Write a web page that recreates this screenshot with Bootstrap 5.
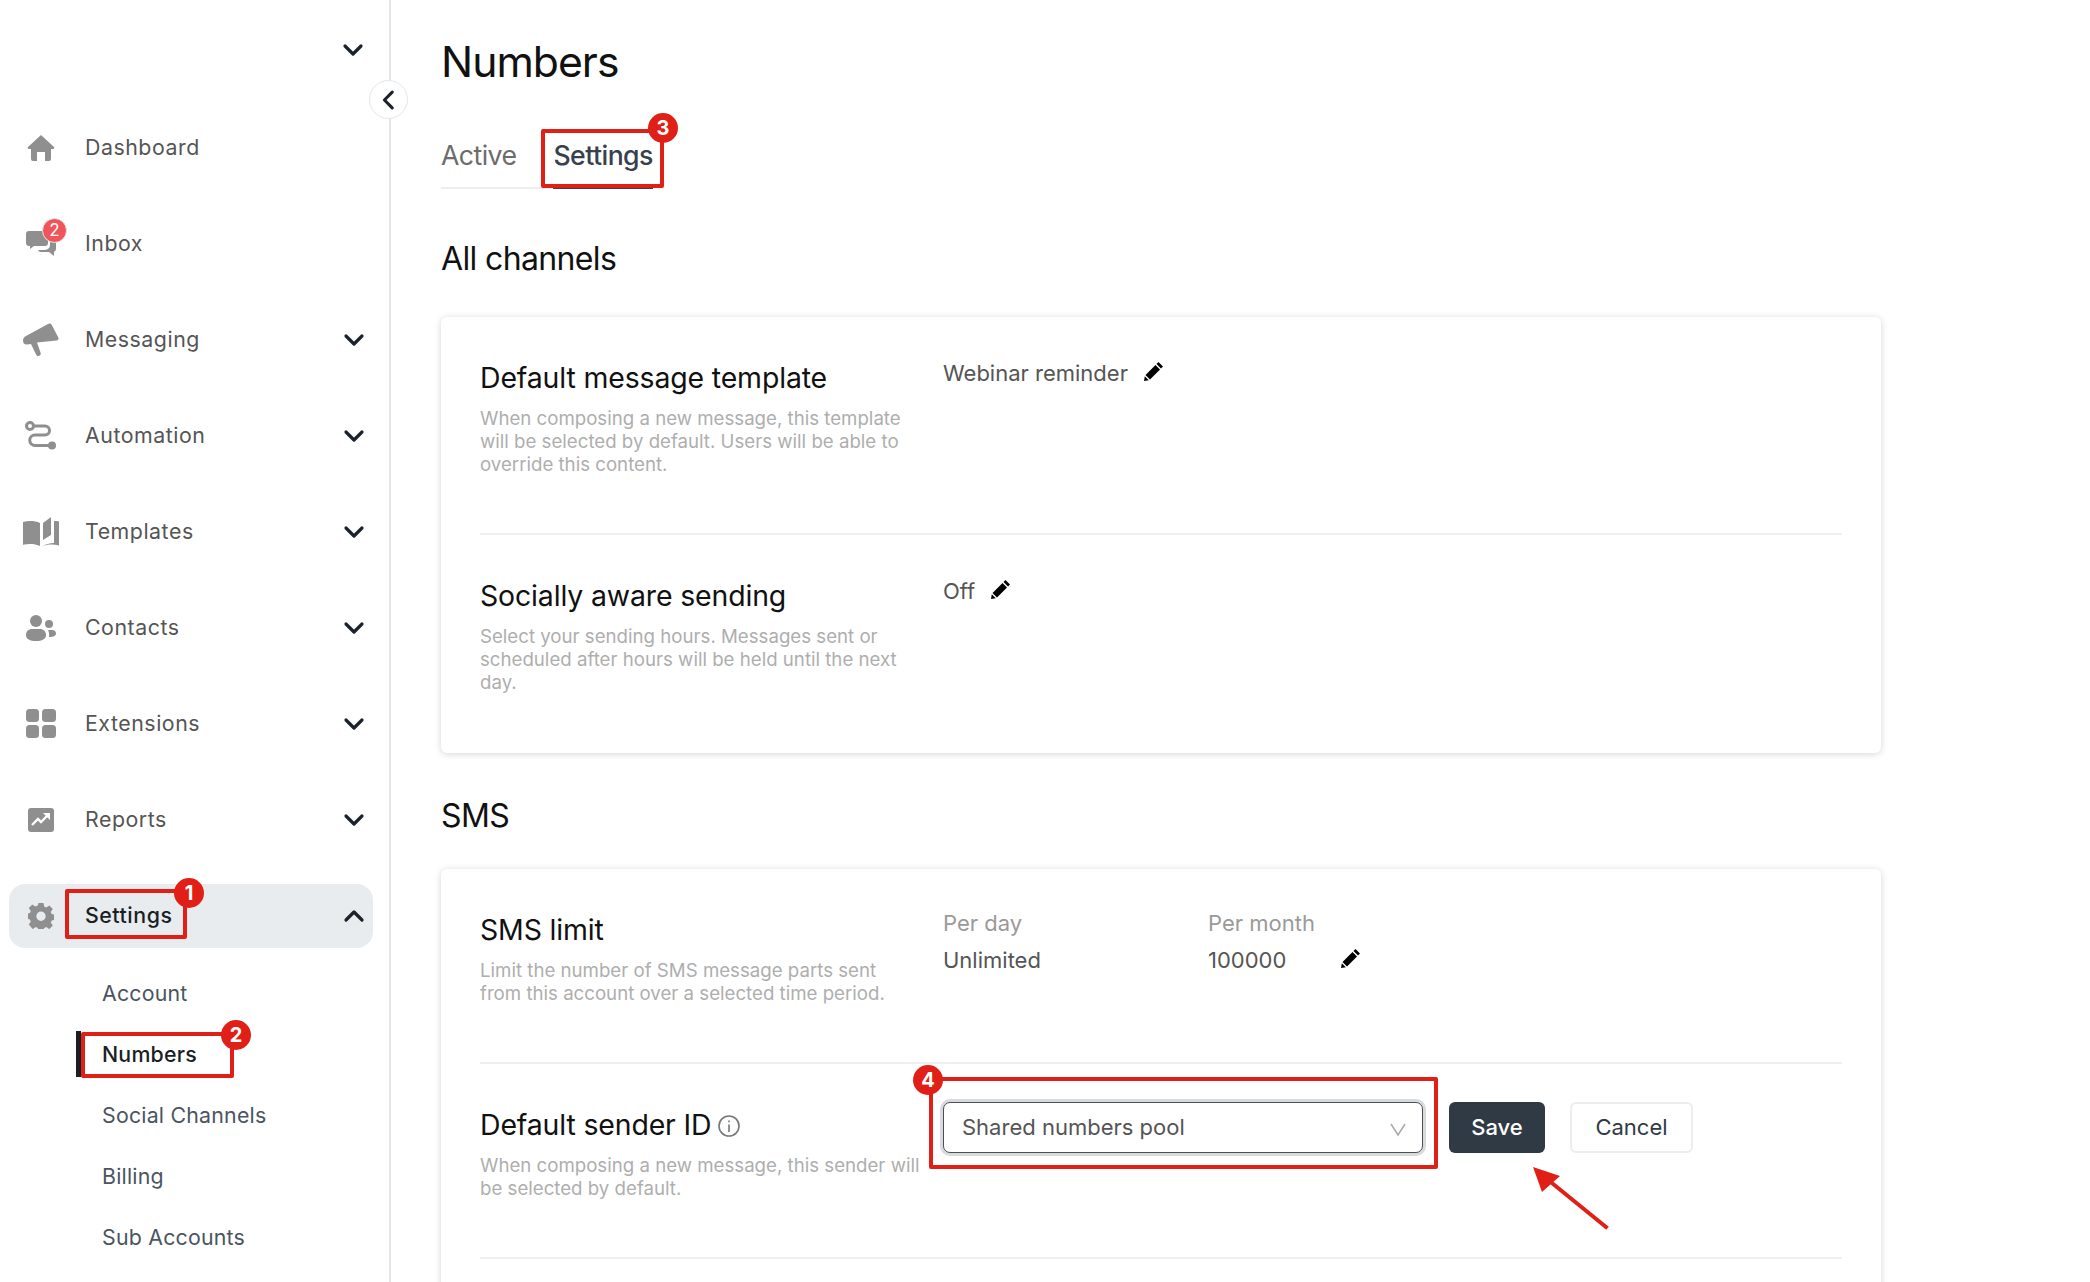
<!DOCTYPE html>
<html lang="en"><head><meta charset="utf-8"><title>Numbers</title>
<link href="https://cdn.jsdelivr.net/npm/bootstrap@5.3.0/dist/css/bootstrap.min.css" rel="stylesheet">
<style>
html,body{height:1282px;overflow:hidden;background:#fff}
body{position:relative;font-family:Inter,"Noto Sans",sans-serif}
.side{width:391px;height:1282px;border-right:2px solid #e3e6e9;flex:none;position:relative;overflow:visible}
.side-top{height:116px;padding:38px 24px 0 0}
.chev{width:24px;height:24px;flex:none;color:#1b2229}
.nv{height:64px;margin:0 16px 32px 9px;padding-right:7px;color:#555;font-size:21.33px;border-radius:16px;text-decoration:none}
.nv .ic{width:64px;flex:none;display:flex;justify-content:center;color:#8f8f8f;position:relative}
.nv .lb{margin-left:12px;flex:1;letter-spacing:.025em}
.nv.on{background:#e9ecef;color:#1a1f24;font-weight:500;margin-bottom:22px}
.inbox-dot{position:absolute;left:33px;top:-12px;width:25px;height:25px;border-radius:50%;background:#f0555a;border:1px solid #e3e6e9;color:#fff;font-size:17px;line-height:23px;text-align:center}
.sub{padding-left:76px}
.sub a{display:block;height:46px;line-height:46px;margin-bottom:15px;border-left:5px solid transparent;padding-left:21px;color:#4a5560;font-size:21.33px;text-decoration:none;letter-spacing:.01em}
.sub a:last-child{margin-bottom:0}
.sub a.on{border-left-color:#1a1f24;color:#1a1f24;font-weight:500}
.collapse-btn{position:absolute;left:369px;top:80px;width:39px;height:39px;border-radius:50%;background:#fff;border:1px solid #e3e6e9;color:#1b2229;z-index:2}
.mainp{padding-left:50px;flex:1;height:1282px;overflow:hidden}
.ttl{font-size:42.67px;line-height:56px;font-weight:400;color:#111;margin:34px 0 0;letter-spacing:-.023em}
.tabsx{display:inline-flex;gap:37px;margin-top:43px;border-bottom:2px solid #eceef0;height:56px;letter-spacing:-.035em}
.tabsx a{font-size:26.67px;line-height:44px;color:#6c6c6c;text-decoration:none;height:56px}
.tabsx a.on{color:#36414d;font-weight:500;border-bottom:3px solid #36414d}
.sect{font-size:32px;line-height:40px;font-weight:400;color:#111;margin:0;letter-spacing:-.02em}
.panel{width:1440px;background:#fff;box-shadow:0 1px 7px rgba(0,0,0,.17);border-radius:6px;padding:0 39px 0 39px}
.rw{padding-top:44px;border-bottom:2px solid #eeeff1}
.rw.last{border-bottom:0}
.lft{width:463px;flex:none}
.rt{font-size:28.44px;line-height:34px;color:#111;margin:0 0 12px;font-weight:400;letter-spacing:-.005em}
.rt svg{vertical-align:-3px;margin-left:-2px}
.ds{font-size:18.67px;line-height:23px;color:#aeaeae;margin:0;width:442px}
.val{font-size:22px;line-height:24px;color:#555}
.lbl{color:#9a9a9a}
.pen{width:20px;height:20px;color:#000;flex:none}
.sel{width:480px;height:51px;font-size:22px;color:#555;border:1.5px solid #4a4f55;border-radius:7px;box-shadow:0 0 0 3px #d8dadc;padding:0 40px 0 18px;font-family:inherit;background-size:20px;background-position:right 14px center;background-image:url("data:image/svg+xml,%3csvg xmlns='http://www.w3.org/2000/svg' viewBox='0 0 20 20'%3e%3cpath fill='none' stroke='%23aaa' stroke-width='1.5' d='M3 6l7 11 7-11'/%3e%3c/svg%3e")}
.btn-sv,.btn-cn{height:51px;font-size:22px;border-radius:6px;padding:0}
.btn-sv{width:96px;background:#2f3a45;color:#fff;border:0;margin-left:26px;font-weight:500}
.btn-cn{width:123px;background:#fff;color:#2f3a45;border:2px solid #ebedef;margin-left:25px}
.rbox{position:absolute;border:4px solid #e02016;border-radius:2px;z-index:5;pointer-events:none}
.rdot{position:absolute;width:30px;height:30px;border-radius:50%;background:#e02016;color:#fff;font-weight:700;font-size:20px;line-height:30px;text-align:center;z-index:6}
.arw{position:absolute;left:1525px;top:1160px;z-index:6}
</style></head><body>
<div class="d-flex">
<aside class="side">
<button class="collapse-btn d-flex align-items-center justify-content-center p-0" aria-label="collapse"><svg width="22" height="22" viewBox="0 0 24 24" fill="none" stroke="currentColor" stroke-width="3.4" stroke-linecap="round" stroke-linejoin="round"><path d="M15.5 3.5 7 12l8.500 8.500"/></svg></button>
<div class="side-top d-flex justify-content-end"><svg class="chev" viewBox="0 0 24 24" fill="none" stroke="currentColor" stroke-width="3.200" stroke-linecap="round" stroke-linejoin="round"><path d="M4 8l8 8 8-8"/></svg></div>

<a class="nv d-flex align-items-center" href="#"><span class="ic"><svg width="28" height="28" viewBox="0 0 28 28" fill="currentColor"><path d="M14 1 27 13c.8.800.3 2-.8 2H24v10a2 2 0 0 1-2 2h-4v-9h-8v9H6a2 2 0 0 1-2-2V15H1.800C.7 15 .2 13.800 1 13z"/></svg></span><span class="lb">Dashboard</span></a>

<a class="nv d-flex align-items-center" href="#"><span class="ic"><svg width="30" height="28" viewBox="0 0 30 28" fill="currentColor"><path d="M3 1h16a3 3 0 0 1 3 3v9a3 3 0 0 1-3 3H8l-4 3v-3.200A3 3 0 0 1 0 13V4a3 3 0 0 1 3-3z"/><path d="M24 8h3a3 3 0 0 1 3 3v8a3 3 0 0 1-2 2.800V26l-5-4h-8a3 3 0 0 1-3-2h7a5 5 0 0 0 5-5z"/></svg><span class="inbox-dot">2</span></span><span class="lb">Inbox</span></a>

<a class="nv d-flex align-items-center" href="#"><span class="ic"><svg width="36" height="34" viewBox="0 0 36 34" fill="currentColor"><path d="M25 1c1.500-1 3-.5 3.800 1l6.500 12.500c.6 1.500 0 3-1.800 3L14 19.500l3.500 10c.5 1.500.1 2.700-1.100 3.300-1.300.6-2.500.2-3.200-1.100L8 21 4 21.500C1.500 21.700 0 20 0 17.500 0 15.500 1 14 3 13z"/></svg></span><span class="lb">Messaging</span><svg class="chev" viewBox="0 0 24 24" fill="none" stroke="currentColor" stroke-width="3.200" stroke-linecap="round" stroke-linejoin="round"><path d="M4 8l8 8 8-8"/></svg></a>

<a class="nv d-flex align-items-center" href="#"><span class="ic"><svg width="32" height="30" viewBox="0 0 32 30" fill="none" stroke="currentColor" stroke-width="3"><circle cx="5" cy="5" r="3.500"/><path d="M8.500 5H20a4.500 4.500 0 0 1 0 9H10a5 5 0 0 0 0 10.500h14"/><circle cx="27" cy="24.500" r="4" fill="currentColor" stroke="none"/></svg></span><span class="lb">Automation</span><svg class="chev" viewBox="0 0 24 24" fill="none" stroke="currentColor" stroke-width="3.200" stroke-linecap="round" stroke-linejoin="round"><path d="M4 8l8 8 8-8"/></svg></a>

<a class="nv d-flex align-items-center" href="#"><span class="ic"><svg width="36" height="30" viewBox="0 0 36 30" fill="currentColor"><path d="M0 5c5-1.500 12-1.500 17 1v23c-5-2.500-12-2.500-17-1.200z"/><path d="M20 23V6l8-6v18zM31 4h3l2 .5v24c-5-1.500-12-1.500-17 1 3-2 8-3.500 12-3.500z"/></svg></span><span class="lb">Templates</span><svg class="chev" viewBox="0 0 24 24" fill="none" stroke="currentColor" stroke-width="3.200" stroke-linecap="round" stroke-linejoin="round"><path d="M4 8l8 8 8-8"/></svg></a>

<a class="nv d-flex align-items-center" href="#"><span class="ic"><svg width="30" height="26" viewBox="0 0 30 26" fill="currentColor"><circle cx="10" cy="6" r="6"/><circle cx="23" cy="9" r="4"/><path d="M0 20c0-4 3-6 6-6h8c3 0 6 2 6 6s-4 6-10 6S0 24 0 20zM22 15h4c2.500 0 4 1.500 4 3.500s-2 3.500-7 3.500c.5-3-.2-5.300-1-7z"/></svg></span><span class="lb">Contacts</span><svg class="chev" viewBox="0 0 24 24" fill="none" stroke="currentColor" stroke-width="3.200" stroke-linecap="round" stroke-linejoin="round"><path d="M4 8l8 8 8-8"/></svg></a>

<a class="nv d-flex align-items-center" href="#"><span class="ic"><svg width="30" height="30" viewBox="0 0 30 30" fill="currentColor"><rect width="13" height="13" rx="3.500"/><rect x="16" width="14" height="13" rx="3.500"/><rect y="16" width="13" height="13" rx="3.500"/><rect x="16" y="16" width="14" height="13" rx="3.500"/></svg></span><span class="lb">Extensions</span><svg class="chev" viewBox="0 0 24 24" fill="none" stroke="currentColor" stroke-width="3.200" stroke-linecap="round" stroke-linejoin="round"><path d="M4 8l8 8 8-8"/></svg></a>

<a class="nv d-flex align-items-center" href="#"><span class="ic"><svg width="26" height="24" viewBox="0 0 26 24" fill="currentColor"><rect width="26" height="24" rx="3"/><path d="M4 17l6-6 3 3 6-6" fill="none" stroke="#fff" stroke-width="2.400"/><path d="M15 5h7v7z" fill="#fff"/></svg></span><span class="lb">Reports</span><svg class="chev" viewBox="0 0 24 24" fill="none" stroke="currentColor" stroke-width="3.200" stroke-linecap="round" stroke-linejoin="round"><path d="M4 8l8 8 8-8"/></svg></a>

<a class="nv on d-flex align-items-center" href="#"><span class="ic"><svg width="26" height="26" viewBox="0 0 26 26" fill="currentColor"><path fill-rule="evenodd" d="M10.500 0h5l.7 3.600 2.100.9 3-2 3.500 3.500-2 3 .9 2.100 3.300.7v5l-3.300.7-.9 2.100 2 3-3.500 3.500-3-2-2.100.9-.7 3.300h-5l-.7-3.300-2.100-.9-3 2L.8 21.600l2-3-.9-2.100L-1 15.800v-5l2.900-.7.9-2.100-2-3L4.300 1.500l3 2 2.500-.9zM13 8.500a4.700 4.700 0 1 0 0 9.400 4.700 4.700 0 0 0 0-9.400z"/></svg></span><span class="lb">Settings</span><svg class="chev" viewBox="0 0 24 24" fill="none" stroke="currentColor" stroke-width="3.200" stroke-linecap="round" stroke-linejoin="round"><path d="M4 16l8-8 8 8"/></svg></a>

<nav class="sub">
<a href="#">Account</a><a class="on" href="#">Numbers</a><a href="#">Social Channels</a><a href="#">Billing</a><a href="#">Sub Accounts</a>
</nav>
</aside>

<main class="mainp">
<h1 class="ttl">Numbers</h1>
<div class="tabsx"><a href="#">Active</a><a class="on" href="#">Settings</a></div>
<h2 class="sect" style="margin-top:50px">All channels</h2>
<section class="panel" style="margin-top:38px">
  <div class="rw d-flex" style="height:218px">
    <div class="lft"><h3 class="rt">Default message template</h3><p class="ds">When composing a new message, this template will be selected by default. Users will be able to override this content.</p></div>
    <div class="val d-flex align-items-start gap-3"><span>Webinar reminder</span><svg class="pen" viewBox="0 0 20 20" fill="currentColor"><path d="M14.500 1l4.500 4.500-2 2L12.500 3zM11.500 4 16 8.500 6 18.500 1.500 14zM.8 15.200l4 4L0 20z"/></svg></div>
  </div>
  <div class="rw last d-flex" style="height:218px">
    <div class="lft"><h3 class="rt">Socially aware sending</h3><p class="ds">Select your sending hours. Messages sent or scheduled after hours will be held until the next day.</p></div>
    <div class="val d-flex align-items-start gap-3"><span>Off</span><svg class="pen" viewBox="0 0 20 20" fill="currentColor"><path d="M14.500 1l4.500 4.500-2 2L12.500 3zM11.500 4 16 8.500 6 18.500 1.500 14zM.8 15.200l4 4L0 20z"/></svg></div>
  </div>
</section>
<h2 class="sect" style="margin-top:43px">SMS</h2>
<section class="panel" style="margin-top:33px;height:600px">
  <div class="rw d-flex" style="height:195px">
    <div class="lft"><h3 class="rt">SMS limit</h3><p class="ds">Limit the number of SMS message parts sent from this account over a selected time period.</p></div>
    <div class="val d-flex" style="margin-top:-2px">
      <div style="width:265px"><div class="lbl">Per day</div><div style="margin-top:13px">Unlimited</div></div>
      <div style="width:133px"><div class="lbl">Per month</div><div style="margin-top:13px">100000</div></div>
      <svg class="pen" style="margin-top:37px" viewBox="0 0 20 20" fill="currentColor"><path d="M14.500 1l4.500 4.500-2 2L12.500 3zM11.500 4 16 8.500 6 18.500 1.500 14zM.8 15.200l4 4L0 20z"/></svg>
    </div>
  </div>
  <div class="rw d-flex" style="height:195px;padding-top:0">
    <div class="lft" style="padding-top:44px"><h3 class="rt">Default sender ID <svg width="24" height="24" viewBox="0 0 24 24" fill="none" stroke="#777" stroke-width="1.600"><circle cx="12" cy="12" r="10"/><path d="M12 10.500V18M12 6.500v1.800"/></svg></h3><p class="ds">When composing a new message, this sender will be selected by default.</p></div>
    <div class="d-flex align-items-start" style="padding-top:38px">
      <select class="form-select sel" aria-label="Default sender ID"><option>Shared numbers pool</option></select>
      <button class="btn btn-sv">Save</button><button class="btn btn-cn">Cancel</button>
    </div>
  </div>
</section>
</main>
</div>

<div class="rbox" style="left:65px;top:889px;width:122px;height:50px"></div><div class="rdot" style="left:174px;top:878px">1</div>
<div class="rbox" style="left:81px;top:1032px;width:153px;height:46px"></div><div class="rdot" style="left:221px;top:1020px">2</div>
<div class="rbox" style="left:541px;top:129px;width:123px;height:59px"></div><div class="rdot" style="left:648px;top:113px">3</div>
<div class="rbox" style="left:929px;top:1077px;width:509px;height:92px"></div><div class="rdot" style="left:913px;top:1065px">4</div>
<svg class="arw" width="90" height="76" viewBox="0 0 90 76"><path d="M81 67 22 19" stroke="#e02016" stroke-width="4" stroke-linecap="square" fill="none"/><path d="M8 7 35 16 17 32z" fill="#e02016"/></svg>
</body></html>
